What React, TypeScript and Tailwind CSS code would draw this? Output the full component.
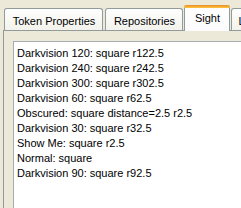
import React from "react";

// XP-style tabbed panel showing the sight types of a token
const tabs = ["Token Properties", "Repositories", "Sight", "Light"];
const selected = "Sight";

const sights: string[] = [
  "Darkvision 120: square r122.5",
  "Darkvision 240: square r242.5",
  "Darkvision 300: square r302.5",
  "Darkvision 60: square r62.5",
  "Obscured: square distance=2.5 r2.5",
  "Darkvision 30: square r32.5",
  "Show Me: square r2.5",
  "Normal: square",
  "Darkvision 90: square r92.5",
];

const Tab: React.FC<{ label: string; active: boolean; width: string }> = ({ label, active, width }) => {
  if (active) {
    return (
      <div
        className={`relative z-10 -mb-px -mx-px flex h-[26px] ${width} shrink-0 flex-col rounded-t-[3px] border-x border-[#919B9C] bg-gradient-to-b from-[#FFFFFF] to-[#FCFCFE]`}
      >
        <div className="h-[3px] rounded-t-[3px] bg-gradient-to-b from-[#E68B2C] to-[#FFC73C] -mx-px" />
        <div className="flex flex-1 items-start justify-center pt-[2px] pl-[1px]">{label}</div>
      </div>
    );
  }
  return (
    <div
      className={`flex h-[22px] ${width} shrink-0 items-center justify-center rounded-t-[3px] border border-b-0 border-[#919B9C] bg-gradient-to-b from-[#FEFEFE] to-[#F3F2EC] pt-[4px] pl-[1px]`}
    >
      {label}
    </div>
  );
};

const widths: Record<string, string> = {
  "Token Properties": "w-[99px]",
  Repositories: "w-[78px]",
  Sight: "w-[46px]",
  Light: "w-[38px]",
};

export default function App() {
  return (
    <div
      className="h-[208px] w-[241px] overflow-hidden bg-[#ECE9D8] text-[11px] text-black"
      style={{ fontFamily: '"Liberation Sans", Arial, sans-serif' }}
    >
      <div className="flex h-[30px] items-end gap-[2px] pl-[4px] whitespace-nowrap">
        {tabs.map((t) => (
          <Tab key={t} label={t} active={t === selected} width={widths[t]} />
        ))}
      </div>
      <div className="ml-[3px] h-[178px] w-[260px] border-l border-t border-[#919B9C] pl-[9px] pt-[10px]">
        <div className="h-[200px] border-l border-t border-[#A5ACB2] bg-white pl-[3px] pt-[4px] leading-[15px] whitespace-nowrap">
          {sights.map((s) => (
            <div key={s}>{s}</div>
          ))}
        </div>
      </div>
    </div>
  );
}
